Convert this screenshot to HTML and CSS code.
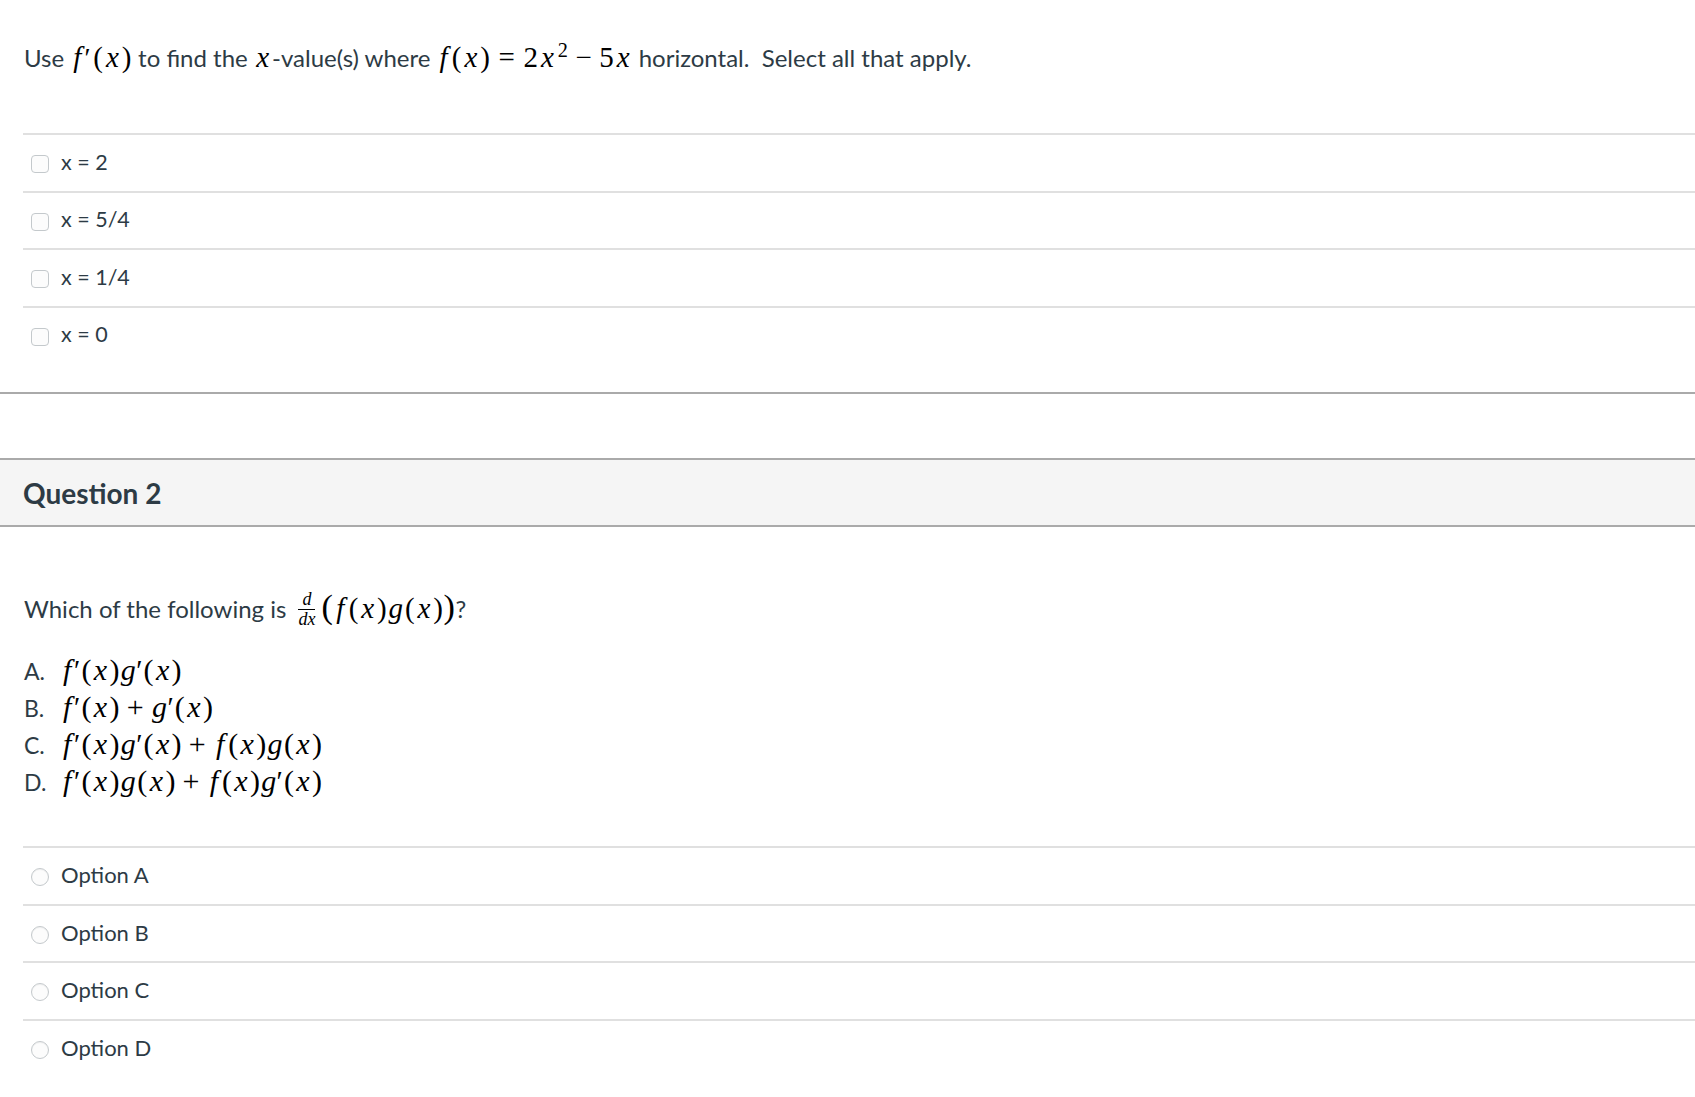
FILE: index.html
```html
<!DOCTYPE html>
<html lang="en">
<head>
  <meta charset="UTF-8">
  <meta name="viewport" content="width=device-width, initial-scale=1.0">
  <title>Quiz</title>
  <link rel="stylesheet" href="styles.css">
</head>
<body>
  <!-- Question 1 (header scrolled off) -->
  <div class="question q1">
    <div class="q-text">
      Use <span class="m"><i class="f">f</i><span class="pr">′</span><span class="gap"></span>(<i>x</i>)</span> to find the <span class="m"><i>x</i></span>-value(s) where <span class="m"><i class="f">f</i>(<i>x</i>)<span class="rel">=</span>2<i>x</i><sup>2</sup><span class="bin">−</span>5<i>x</i></span> horizontal.&nbsp; Select all that apply.
    </div>
    <div class="answers">
      <label class="answer"><span class="box"></span>x = 2</label>
      <label class="answer"><span class="box"></span>x = 5/4</label>
      <label class="answer"><span class="box"></span>x = 1/4</label>
      <label class="answer"><span class="box"></span>x = 0</label>
    </div>
  </div>

  <div class="question q2">
    <div class="q-header">Question 2</div>
    <div class="q-text">
      Which of the following is <span class="m"><span class="frac"><span class="num"><i>d</i></span><span class="den"><i>d</i><i>x</i></span></span><span class="big">(</span><i class="f">f</i>(<i>x</i>)<i class="g">g</i>(<i>x</i>)<span class="big">)</span></span>?
    </div>
    <div class="choices">
      <div class="choice"><span class="lbl">A.</span><span class="m"><i class="f">f</i><span class="pr">′</span>(<i>x</i>)<i class="g">g</i><span class="pr">′</span>(<i>x</i>)</span></div>
      <div class="choice"><span class="lbl">B.</span><span class="m"><i class="f">f</i><span class="pr">′</span>(<i>x</i>)<span class="bin">+</span><i class="g">g</i><span class="pr">′</span>(<i>x</i>)</span></div>
      <div class="choice"><span class="lbl">C.</span><span class="m"><i class="f">f</i><span class="pr">′</span>(<i>x</i>)<i class="g">g</i><span class="pr">′</span>(<i>x</i>)<span class="bin">+</span><i class="f">f</i>(<i>x</i>)<i class="g">g</i>(<i>x</i>)</span></div>
      <div class="choice"><span class="lbl">D.</span><span class="m"><i class="f">f</i><span class="pr">′</span>(<i>x</i>)<i class="g">g</i>(<i>x</i>)<span class="bin">+</span><i class="f">f</i>(<i>x</i>)<i class="g">g</i><span class="pr">′</span>(<i>x</i>)</span></div>
    </div>
    <div class="answers">
      <label class="answer opt"><span class="radio"></span>Option A</label>
      <label class="answer opt"><span class="radio"></span>Option B</label>
      <label class="answer opt"><span class="radio"></span>Option C</label>
      <label class="answer opt"><span class="radio"></span>Option D</label>
    </div>
  </div>
</body>
</html>
```

FILE: styles.css
```css
body {
  margin: 0;
  font-family: Lato, "Open Sans", sans-serif;
  color: #2d3b45;
  background: #fff;
}
.question {
  border-bottom: 2px solid #aaa;
}
.q1 {
  padding-bottom: 29px;
}
.q2 {
  border-top: 2px solid #aaa;
  border-bottom: none;
  margin-top: 64px;
}
.q-header {
  background: #f5f5f5;
  border-bottom: 2px solid #aaa;
  height: 65px;
  display: flex;
  align-items: center;
  padding-left: 23px;
  font-size: 28px;
  font-weight: bold;
}
.q-text {
  font-size: 24px;
  line-height: 36px;
  height: 36px;
  padding-left: 24px;
}
.q1 .q-text {
  padding-top: 40px;
}
.q2 .q-text {
  padding-top: 64px;
}
.answers {
  margin-left: 23px;
  margin-top: 57px;
}
.q2 .answers {
  margin-top: 45px;
}
.answer {
  display: flex;
  align-items: center;
  gap: 12px;
  height: 57.5px;
  box-sizing: border-box;
  border-top: 2px solid #e0e0e0;
  padding-left: 8px;
  padding-bottom: 2px;
  font-size: 21.5px;
}
.answer.opt {
  font-size: 22px;
}
.box, .radio {
  width: 16px;
  height: 16px;
  border: 1px solid #c4c9cc;
  background: #fcfcfc;
  margin-top: 5px;
  flex-shrink: 0;
}
.box {
  border-radius: 4px;
}
.radio {
  border-radius: 50%;
  box-shadow: inset 0 1px 1px rgba(0, 0, 0, 0.06);
}
.choices {
  margin-top: 26px;
  padding-left: 24px;
}
.choice {
  font-size: 23px;
  line-height: 37px;
  height: 37px;
  display: flex;
  align-items: baseline;
}
.lbl {
  width: 36px;
  flex-shrink: 0;
}

/* hand-set math */
.m {
  font-family: "Liberation Serif", "Times New Roman", serif;
  font-size: 29px;
  line-height: 1;
  color: #000;
  white-space: nowrap;
}
.q-text .m {
  letter-spacing: 0.02em;
}
.choice .m {
  font-size: 30px;
}
.m i {
  font-style: italic;
  padding: 0 0.08em;
}
.m i.f {
  padding: 0 0.13em 0 0.1em;
}
.m i.g {
  padding: 0 0.05em 0 0.04em;
}
.m .pr {
  font-size: 0.95em;
  line-height: 0;
  margin: 0 0.04em 0 -0.04em;
}
.m .gap {
  display: inline-block;
  width: 0.04em;
}
.m .rel {
  margin: 0 0.28em;
}
.m .bin {
  margin: 0 0.24em;
}
.m sup {
  font-size: 0.7em;
  vertical-align: 0.5em;
  line-height: 0;
  margin-left: 0.05em;
}
.frac {
  display: inline-flex;
  flex-direction: column;
  align-items: center;
  vertical-align: middle;
  font-size: 18px;
  line-height: 1;
  letter-spacing: 0;
  margin: 0 6px 0 6px;
  position: relative;
  top: -2px;
}
.frac .num {
  border-bottom: 1px solid #000;
  align-self: stretch;
  text-align: center;
  padding-bottom: 1px;
}
.frac i {
  padding: 0;
}
.big {
  font-size: 1.18em;
  line-height: 0;
}
```
